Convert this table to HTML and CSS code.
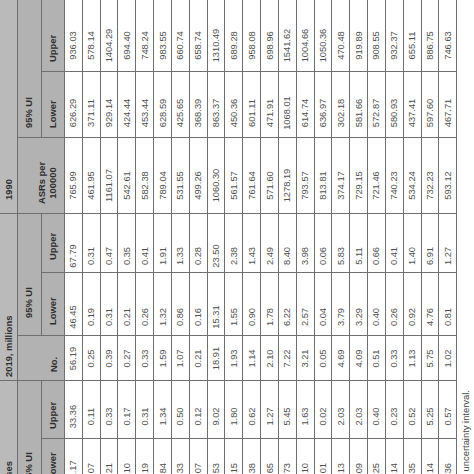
FILE: index.html
```html
<!DOCTYPE html>
<html>
<head>
<meta charset="utf-8">
<link rel="stylesheet" href="styles.css">
</head>
<body>
<div class="page">
  <div class="figure">
    <div class="table">
      <div class="top span-hg"><span>Cases</span></div>
      <div class="top span-fed"><span>2019, millions</span></div>
      <div class="top span-cba"><span>1990</span></div>

      <div class="hd ui span-hg2">95% UI</div>
      <div class="hd no">No.</div>
      <div class="hd ui ui-ed">95% UI</div>
      <div class="hd asr">ASRs per<br>100000</div>
      <div class="hd ui ui-ba">95% UI</div>

      <div class="hd sub sub-h">Lower</div>
      <div class="hd sub">Upper</div>
      <div class="hd sub sub-e">Lower</div>
      <div class="hd sub sub-d">Upper</div>
      <div class="hd sub sub-b">Lower</div>
      <div class="hd sub sub-a">Upper</div>

      <div class="row"><div>21.17</div><div>33.36</div><div>56.19</div><div>46.45</div><div>67.79</div><div>765.99</div><div>626.29</div><div>936.03</div></div>
      <div class="row"><div>0.07</div><div>0.11</div><div>0.25</div><div>0.19</div><div>0.31</div><div>461.95</div><div>371.11</div><div>578.14</div></div>
      <div class="row"><div>0.21</div><div>0.33</div><div>0.39</div><div>0.31</div><div>0.47</div><div>1161.07</div><div>929.14</div><div>1404.29</div></div>
      <div class="row"><div>0.10</div><div>0.17</div><div>0.27</div><div>0.21</div><div>0.35</div><div>542.61</div><div>424.44</div><div>694.40</div></div>
      <div class="row"><div>0.19</div><div>0.31</div><div>0.33</div><div>0.26</div><div>0.41</div><div>582.38</div><div>453.44</div><div>748.24</div></div>
      <div class="row"><div>0.84</div><div>1.34</div><div>1.59</div><div>1.32</div><div>1.91</div><div>789.04</div><div>628.59</div><div>983.55</div></div>
      <div class="row"><div>0.33</div><div>0.50</div><div>1.07</div><div>0.86</div><div>1.33</div><div>531.55</div><div>425.65</div><div>660.74</div></div>
      <div class="row"><div>0.07</div><div>0.12</div><div>0.21</div><div>0.16</div><div>0.28</div><div>499.26</div><div>368.39</div><div>658.74</div></div>
      <div class="row"><div>5.53</div><div>9.02</div><div>18.91</div><div>15.31</div><div>23.50</div><div>1060.30</div><div>863.37</div><div>1310.49</div></div>
      <div class="row"><div>1.15</div><div>1.80</div><div>1.93</div><div>1.55</div><div>2.38</div><div>561.57</div><div>450.36</div><div>689.28</div></div>
      <div class="row"><div>0.38</div><div>0.62</div><div>1.14</div><div>0.90</div><div>1.43</div><div>761.64</div><div>601.11</div><div>958.08</div></div>
      <div class="row"><div>0.65</div><div>1.27</div><div>2.10</div><div>1.78</div><div>2.49</div><div>571.60</div><div>471.91</div><div>698.96</div></div>
      <div class="row"><div>3.73</div><div>5.45</div><div>7.22</div><div>6.22</div><div>8.40</div><div>1278.19</div><div>1068.01</div><div>1541.62</div></div>
      <div class="row"><div>1.10</div><div>1.63</div><div>3.21</div><div>2.57</div><div>3.98</div><div>793.57</div><div>614.74</div><div>1004.66</div></div>
      <div class="row"><div>0.01</div><div>0.02</div><div>0.05</div><div>0.04</div><div>0.06</div><div>813.81</div><div>636.97</div><div>1050.36</div></div>
      <div class="row"><div>1.13</div><div>2.03</div><div>4.69</div><div>3.79</div><div>5.83</div><div>374.17</div><div>302.18</div><div>470.48</div></div>
      <div class="row"><div>1.09</div><div>2.03</div><div>4.09</div><div>3.29</div><div>5.11</div><div>729.15</div><div>581.66</div><div>919.89</div></div>
      <div class="row"><div>0.25</div><div>0.40</div><div>0.51</div><div>0.40</div><div>0.66</div><div>721.46</div><div>572.87</div><div>908.55</div></div>
      <div class="row"><div>0.14</div><div>0.23</div><div>0.33</div><div>0.26</div><div>0.41</div><div>740.23</div><div>580.93</div><div>932.37</div></div>
      <div class="row"><div>0.35</div><div>0.52</div><div>1.13</div><div>0.92</div><div>1.40</div><div>534.24</div><div>437.41</div><div>655.11</div></div>
      <div class="row"><div>3.14</div><div>5.25</div><div>5.75</div><div>4.76</div><div>6.91</div><div>732.23</div><div>597.60</div><div>886.75</div></div>
      <div class="row"><div>0.36</div><div>0.57</div><div>1.02</div><div>0.81</div><div>1.27</div><div>593.12</div><div>467.71</div><div>746.63</div></div>
    </div>
    <p class="note">UI, uncertainty interval.</p>
  </div>
</div>
</body>
</html>
```
FILE: styles.css
```css
html, body {
  margin: 0;
  padding: 0;
  width: 474px;
  height: 474px;
  overflow: hidden;
  background: #fff;
}

.page {
  width: 474px;
  height: 474px;
  overflow: hidden;
  transform: rotate(-90deg);
  font-family: "Liberation Sans", Arial, sans-serif;
}

.figure {
  margin-left: -22px;
  width: 504px;
}

.table {
  display: grid;
  grid-template-columns: 57px 57px 44px 62px 58px 75px 65px 79px;
  grid-template-rows: 17px 23px 22px repeat(22, 16.84px);
  gap: 1px;
  background: #6f6f6f;
  padding-bottom: 1px;
}

.top {
  background: #bababa;
  font-size: 9.4px;
  font-weight: bold;
  color: #2e2e2e;
  display: flex;
  align-items: center;
  white-space: nowrap;
}
.span-hg { grid-column: 1 / 3; justify-content: flex-end; padding-right: 80px; }
.span-fed { grid-column: 3 / 6; padding-left: 3px; }
.span-cba { grid-column: 6 / 9; padding-left: 13px; }

.hd {
  background: #b2b2b2;
  font-size: 9.4px;
  font-weight: bold;
  color: #2e2e2e;
  display: flex;
  align-items: center;
  white-space: nowrap;
  line-height: 10.5px;
}
.ui { grid-row: 2; }
.span-hg2 { grid-column: 1 / 3; padding-left: 13px; }
.ui-ed { grid-column: 4 / 6; padding-left: 17px; }
.ui-ba { grid-column: 7 / 9; padding-left: 9px; }
.no {
  grid-column: 3;
  grid-row: 2 / 4;
  align-items: flex-end;
  padding: 0 0 5px 8px;
}
.asr {
  grid-column: 6;
  grid-row: 2 / 4;
  align-items: flex-end;
  justify-content: center;
  text-align: center;
  padding: 0 15px 6px 0;
}
.sub { grid-row: 3; padding-left: 9px; }
.sub-h { grid-column: 1; padding-left: 16px; }
.sub-e { grid-column: 4; padding-left: 10px; }
.sub-d { grid-column: 5; padding-left: 12px; }
.sub-b { grid-column: 7; }
.sub-a { grid-column: 8; }

.row { display: contents; }
.row > div {
  background: #fff;
  font-size: 9.3px;
  color: #505050;
  display: flex;
  align-items: center;
  justify-content: center;
  white-space: nowrap;
}
.row > div:nth-child(1) { padding-right: 9px; }
.row > div:nth-child(2) { padding-right: 14px; }
.row > div:nth-child(3) { padding-right: 1px; }
.row > div:nth-child(4) { padding-right: 26px; }
.row > div:nth-child(5) { padding-right: 26px; }
.row > div:nth-child(6) { padding-right: 20px; }
.row > div:nth-child(7) { padding-right: 17px; }
.row > div:nth-child(8) { padding-right: 28px; }

.note {
  margin: 3px 0 0 10px;
  font-size: 9.4px;
  color: #444;
  line-height: 11px;
}
```
